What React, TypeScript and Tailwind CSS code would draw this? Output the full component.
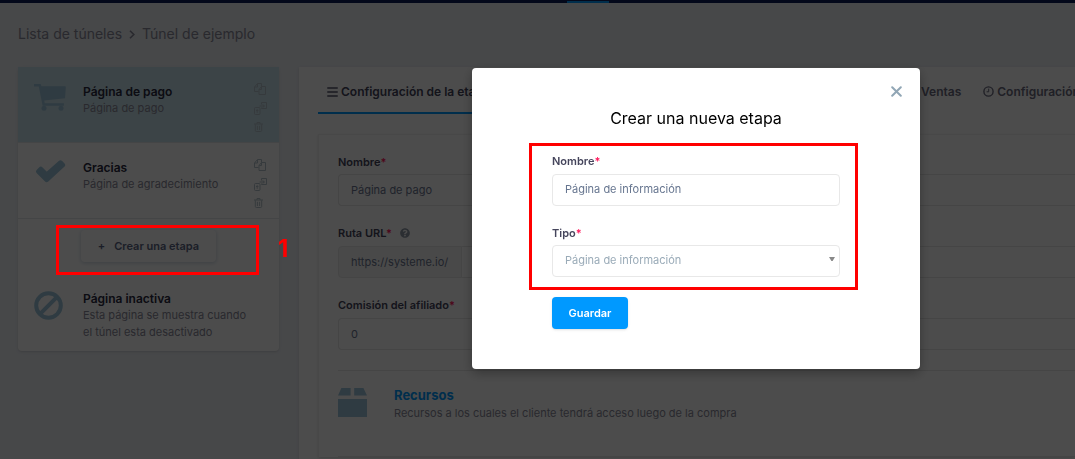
import React from 'react';
import { FaQuestionCircle } from 'react-icons/fa';

const CartIcon = () => (
	<svg width={32} height={27} viewBox="0 0 32 27" fill="#9dc6dc">
		<path d="M0 0h6.6l.9 2.2h23.2c.8 0 1.2.5 1.1 1.2L31 14.2 10.2 16.6l.5 2.6h19.2v2.6H8.6L4.8 2.6H0z" />
		<circle cx="10" cy="24.2" r="2.5" />
		<circle cx="27" cy="24.2" r="2.5" />
	</svg>
);

const CheckIcon = () => (
	<svg width={32} height={24} viewBox="0 0 32 24" fill="none">
		<path stroke="#9dc6dc" strokeWidth={5} strokeLinejoin="round" fill="#9dc6dc" d="M4.6 11.4l2.2-2.2 5.8 5.8L26.4 2.8l2.2 2.2-16 14.6z" />
	</svg>
);

const BanIcon = () => (
	<svg width={29} height={29} viewBox="0 0 29 29" fill="none">
		<g stroke="#9dc6dc" strokeWidth={4}>
			<circle cx="14.5" cy="14.5" r="12.3" />
			<path d="M5.9 23.1 23.1 5.9" />
		</g>
	</svg>
);

const BoxIcon = () => (
	<svg width={29} height={29} viewBox="0 0 29 29" fill="#9dc6dc">
		<path d="M3.4 0h9.2v7.4H0zM16.2 0h9.2L29 7.4H16.2zM0 11h29v18H0z" />
	</svg>
);

const MenuIcon = () => (
	<svg width={11} height={10} viewBox="0 0 11 10" fill="none">
		<path stroke="#55556b" strokeWidth={1.5} strokeLinecap="round" d="M.8 1h9.4M.8 5h9.4M.8 9h9.4" />
	</svg>
);

const ClockIcon = () => (
	<svg width={11} height={11} viewBox="0 0 11 11" fill="none">
		<circle cx="5.5" cy="5.5" r="4.6" stroke="#6c6c80" strokeWidth={1.4} />
		<path stroke="#6c6c80" d="M5.7 2.6v3.2H3.6" />
	</svg>
);

const CopyIcon = () => (
	<svg width={13} height={12} viewBox="0 0 13 12" fill="none" stroke="currentColor">
		<path d="M4.5 8.5h-4V4l3-3.5h4v3M.8 4h2.7V.8" />
		<path d="M5 6.5l2.5-3h4v8H5zM5.2 6.5h2.3V3.8" />
	</svg>
);

const MoveIcon = () => (
	<svg width={13} height={13} viewBox="0 0 13 13" fill="none" stroke="currentColor">
		<rect x=".5" y="5.5" width="5.5" height="7" rx="1" />
		<path d="M3.2 7.2v3.6M2 8.5h2.4M7.5 2.5v-2h5v6h-5v-1M5.5 4h4.7M8.8 2.4 10.4 4 8.8 5.6" />
	</svg>
);

const TrashIcon = () => (
	<svg width={9} height={10} viewBox="0 0 9 10" fill="none" stroke="currentColor">
		<path d="M0 2h9M3 2V.5h3V2M1.3 2.3v6.2c0 .6.4 1 1 1h4.4c.6 0 1-.4 1-1V2.3M3.4 3.8v4.2M5.6 3.8v4.2" />
	</svg>
);

const CloseIcon = () => (
	<svg width={11} height={11} viewBox="0 0 11 11" fill="none">
		<path stroke="#91a6b5" strokeWidth={2} strokeLinecap="round" d="m1.2 1.2 8.6 8.6M9.8 1.2 1.2 9.8" />
	</svg>
);

function StepActions() {
	return (
		<div className="mr-3 flex flex-col items-start gap-[7px] text-[#b4c3cb]">
			<button aria-label="Duplicar"><CopyIcon /></button>
			<button aria-label="Mover"><MoveIcon /></button>
			<button aria-label="Eliminar"><TrashIcon /></button>
		</div>
	);
}

function Step({ title, text, Icon, active, actions }: {
	title: string;
	text: string;
	Icon: any;
	active?: boolean;
	actions?: boolean;
}) {
	return (
		<div className={`flex pl-4 pt-4 pb-[10px] ${active ? "bg-[#cae3ed]" : ""} ${actions ? "border-b border-[#e3e8ec]" : "pr-7"}`}>
			<div className="flex w-[49px] shrink-0 items-start pt-px [&_svg]:block"><Icon /></div>
			<div className="flex-1 leading-[17px]">
				<div className="text-xs leading-[17px] font-semibold text-[#2b2b40]">{title}</div>
				<div className="text-[11px] leading-[17px] text-[#8a8a9a]">{text}</div>
			</div>
			{actions && <div className="[&_svg]:block"><StepActions /></div>}
		</div>
	);
}

function Label({ id, children }: { id: string; children: React.ReactNode }) {
	return (
		<label htmlFor={id} className="text-[11px] leading-[18px] font-semibold text-[#45455c]">
			{children}<span className="text-[#ff1a5e]">*</span>
		</label>
	);
}

function Sidebar() {
	return (
		<aside className="w-[261px] shrink-0 self-start rounded-sm bg-white shadow-sm">
			<Step title="Página de pago" text="Página de pago" Icon={CartIcon} active actions />
			<Step title="Gracias" text="Página de agradecimiento" Icon={CheckIcon} actions />
			<div className="relative flex pl-[63px] pt-[11px] pb-3">
				<button className="flex h-8 w-[135px] items-center justify-center gap-[9px] rounded-sm text-[11px] font-semibold text-[#5c6785] shadow-[0_1px_4px_#c9d5e0]">
					<span>+</span>Crear una etapa
				</button>
				<div className="absolute top-[6px] left-[38px] z-20 h-[50px] w-[203px] border-[3px] border-[#ff0000]" />
				<span className="absolute top-[18px] left-[260px] z-20 text-2xl leading-6 font-bold text-[#ff0000]">1</span>
			</div>
			<Step title="Página inactiva" text="Esta página se muestra cuando el túnel esta desactivado" Icon={BanIcon} />
		</aside>
	);
}

function StepSettings() {
	const input = "h-8 w-full rounded-l-sm border border-r-0 border-[#e6e6e6] bg-transparent px-3 text-[11px] text-[#6b7590] outline-none";
	return (
		<main className="min-w-0 flex-1 overflow-hidden bg-white pl-[19px] shadow-sm">
			<nav className="flex h-[47px] whitespace-nowrap text-xs font-semibold">
				<a href="#config" className="flex w-60 items-center gap-[3px] border-b-2 border-[#0099ff] pl-[9px] pt-[4px] text-[#45455c]">
					<MenuIcon />Configuración de la etapa
				</a>
				<div className="ml-auto flex w-[154px] items-center gap-[22px] pt-[2px] text-[#6c6c80]">
					<a href="#ventas">Ventas</a>
					<a href="#fecha" className="flex items-center gap-[3px]"><ClockIcon />Configuración</a>
				</div>
			</nav>
			<section className="mt-5 border-t border-l border-[#f2f2f2] pl-[19px] pt-[18px] shadow-sm">
				<div className="flex flex-col gap-[18px]">
					<div className="flex flex-col gap-[3px]">
						<Label id="page-name">Nombre</Label>
						<input id="page-name" className={input} defaultValue="Página de pago" />
					</div>
					<div className="flex flex-col gap-1">
						<div className="flex items-center gap-2 leading-[18px]">
							<Label id="page-url">Ruta URL</Label>
							<FaQuestionCircle className="text-[10px] text-[#8f9aa8]" />
						</div>
						<div className="flex">
							<span className="flex h-8 w-[124px] shrink-0 items-center rounded-l-sm border border-[#e6e6e6] bg-[#f5f5f5] px-3 text-[11px] text-[#6b7590]">https://systeme.io/</span>
							<input id="page-url" className="h-8 w-full border-y border-[#e6e6e6] px-3 text-[11px] outline-none" />
						</div>
					</div>
					<div className="flex flex-col gap-1">
						<Label id="commission">Comisión del afiliado</Label>
						<input id="commission" className={input} defaultValue="0" />
					</div>
				</div>
				<div className="mt-5 flex gap-[27px] border-y border-[#e6e6e6] pt-[14px] pb-[35px]">
					<div className="pt-[3px] [&_svg]:block"><BoxIcon /></div>
					<div className="whitespace-nowrap">
						<h3 className="text-[13px] leading-5 font-bold text-[#0099ff]">Recursos</h3>
						<p className="text-[11px] leading-4 text-[#8a8a9a]">Recursos a los cuales el cliente tendrá acceso luego de la compra</p>
					</div>
				</div>
			</section>
		</main>
	);
}

function NewStepModal() {
	const field = "h-8 w-full rounded-sm border border-[#e8e8e8] bg-white px-3 pb-[2px] text-[11px] outline-none";
	return (
		<div className="fixed inset-0 z-10 flex items-start justify-center bg-black/70 pt-[68px] pl-[317px]">
			<div role="dialog" aria-label="Crear una nueva etapa" className="relative w-full max-w-md rounded-sm bg-white px-20 pt-[38px] pb-10 shadow-[0_4px_12px_rgba(0,0,0,0.3)]">
				<button aria-label="Cerrar" className="absolute top-[18px] right-[18px] [&_svg]:block"><CloseIcon /></button>
				<h2 className="text-center text-base leading-6 text-black">Crear una nueva etapa</h2>
				<form className="mt-[22px]">
					<div className="relative flex flex-col gap-[18px]">
						<div className="flex flex-col gap-1">
							<Label id="step-name">Nombre</Label>
							<input id="step-name" className={`${field} text-[#66758f]`} defaultValue="Página de información" />
						</div>
						<div className="flex flex-col gap-[3px]">
							<Label id="step-type">Tipo</Label>
							<div className="relative">
								<select id="step-type" className={`${field} appearance-none text-[#9aabb8]`}>
									<option>Página de información</option>
								</select>
								<svg className="pointer-events-none absolute top-3 right-[5px]" width={6} height={4} viewBox="0 0 6 4" fill="#888"><path d="M0 0h6L3.6 4H2.4z" /></svg>
							</div>
						</div>
						<div className="pointer-events-none absolute -top-[9px] -right-[18px] -bottom-[13px] -left-[23px] border-[3px] border-[#ff0000]" />
					</div>
					<button type="button" className="mt-5 h-8 w-[76px] rounded-sm bg-[#0099ff] text-[11px] font-semibold text-white shadow-sm">Guardar</button>
				</form>
			</div>
		</div>
	);
}

function App() {
	return (
		<div className="flex min-h-screen flex-col overflow-hidden bg-[#edf0f5] font-['Inter',sans-serif]">
			<div className="flex h-[3px] bg-[#0c1c58] pl-[567px]">
				<div className="mt-px w-[42px] bg-[#0099ff]" />
			</div>
			<header className="flex items-center gap-[7px] pt-[21px] pr-4 pb-[23px] pl-[18px] text-sm leading-5 text-[#8a8a9a]">
				<a href="#tuneles">Lista de túneles</a>
				<svg width={6} height={9} viewBox="0 0 6 9" fill="none"><path stroke="#8a8a9a" strokeWidth={1.6} d="m1 .8 3.8 3.7L1 8.2" /></svg>
				<span>Túnel de ejemplo</span>
			</header>
			<div className="flex flex-1 gap-5 pl-[18px]">
				<Sidebar />
				<StepSettings />
			</div>
			<NewStepModal />
		</div>
	);
}

export default App;
